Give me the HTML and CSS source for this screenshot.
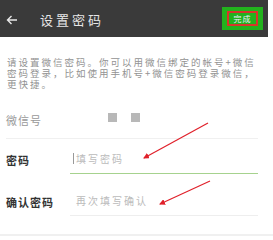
FILE: index.html
```html
<!DOCTYPE html>
<html lang="zh">
<head>
<meta charset="utf-8">
<link rel="stylesheet" href="styles.css">
</head>
<body>
<div class="page">
  <header class="bar">
    <svg class="back" width="12" height="10" viewBox="0 0 12 10"><path d="M11 5H1.5M5.5 1L1.5 5L5.5 9" fill="none" stroke="#e8e8e8" stroke-width="1.4"/></svg>
    <span class="title">设置密码</span>
    <span class="done"><span class="done-inner">完成</span></span>
  </header>
  <p class="desc">请设置微信密码。你可以用微信绑定的帐号+微信密码登录，比如使用手机号+微信密码登录微信，更快捷。</p>
  <div class="row row-id">
    <span class="label muted">微信号</span>
    <span class="masks"><i></i><i></i></span>
  </div>
  <div class="row row-pw">
    <span class="label">密码</span>
    <span class="field active"><span class="caret"></span>填写密码</span>
  </div>
  <div class="row row-cf">
    <span class="label">确认密码</span>
    <span class="field">再次填写确认</span>
  </div>
  <div class="foot"></div>
  <svg class="arrows" width="273" height="240" viewBox="0 0 273 240">
    <defs>
      <marker id="ah" markerWidth="6" markerHeight="6" refX="5" refY="3" orient="auto" markerUnits="userSpaceOnUse">
        <path d="M0 0L6 3L0 6Z" fill="#e0202a"/>
      </marker>
    </defs>
    <line x1="208" y1="123" x2="144" y2="158" stroke="#e0202a" stroke-width="1.2" marker-end="url(#ah)"/>
    <line x1="210" y1="181" x2="160" y2="204" stroke="#e0202a" stroke-width="1.2" marker-end="url(#ah)"/>
  </svg>
</div>
</body>
</html>
```
FILE: styles.css
```css
html, body { margin: 0; padding: 0; background: #fff; }
body { font-family: "Noto Sans CJK SC", "Noto Sans", sans-serif; width: 273px; height: 240px; overflow: hidden; }
.page { position: relative; width: 273px; height: 240px; }
.bar {
  height: 37px; margin-right: 5px; background: #3a3a3a;
  display: flex; align-items: center; box-sizing: border-box; padding: 2px 5px 0 6px;
}
.back { flex: none; }
.title { color: #e6e6e6; font-size: 13px; letter-spacing: 3px; margin-left: 22px; flex: 1; }
.done {
  background: #22b21d; width: 41px; height: 23px; display: flex; align-items: center; justify-content: center; margin-top: -2px;
}
.done-inner {
  border: 2px solid #d8342a; width: 31px; height: 15px; box-sizing: border-box;
  color: #eef; font-size: 8px; line-height: 11px; text-align: center; letter-spacing: 1px;
}
.desc {
  margin: 20px 12px 0 7px; color: #939393; font-size: 9.5px; line-height: 11px; letter-spacing: 2px;
}
.row { display: flex; margin: 0 15px 0 6px; }
.label { width: 64px; flex: none; font-size: 11px; line-height: 14px; color: #333; font-weight: 700; letter-spacing: 1px; }
.label.muted { color: #999; font-weight: 400; width: 102px; }
.row-id { height: 37px; align-items: center; margin-top: 11px; border-bottom: 1px solid #f0f0f0; }
.masks { display: flex; gap: 14px; margin-top: -4px; }
.masks i { display: block; width: 9px; height: 9px; background: #b8b8b8; }
.row-pw { height: 35px; }
.row-cf { height: 42px; }
.row-pw .label, .row-cf .label { align-self: flex-end; margin-bottom: 7px; }
.field {
  flex: 1; display: flex; align-items: flex-end; box-sizing: border-box; padding-bottom: 7px;
  font-size: 10px; line-height: 14px; color: #bbb; letter-spacing: 2px; border-bottom: 1px solid #eee; padding-left: 6px;
}
.field.active { border-bottom: 1px solid #a6d28e; padding-left: 3px; }
.caret { width: 1px; height: 11px; background: #999; margin-right: 2px; margin-bottom: 2px; }
.foot { margin-top: 18px; height: 2px; background: #f0f0f0; }
.arrows { position: absolute; left: 0; top: 0; pointer-events: none; }
```
